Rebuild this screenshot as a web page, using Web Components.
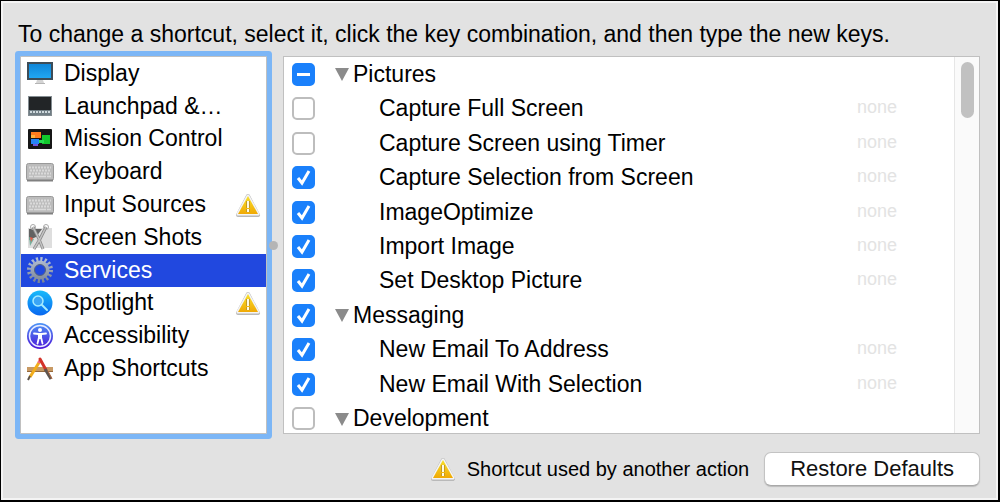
<!DOCTYPE html>
<html lang="en">
<head>
<meta charset="utf-8">
<title>Keyboard Shortcuts</title>
<style>
  body {
    margin: 0;
    font-family: "Liberation Sans", Arial, sans-serif;
    font-size: 23px;
    color: #000;
    background: #000;
  }
</style>
</head>
<body>
<prefs-window>
  <span slot="hint">To change a shortcut, select it, click the key combination, and then type the new keys.</span>

  <category-list slot="sidebar">
    <category-item icon="display">Display</category-item>
    <category-item icon="launchpad">Launchpad &amp;…</category-item>
    <category-item icon="mission">Mission Control</category-item>
    <category-item icon="keyboard">Keyboard</category-item>
    <category-item icon="keyboard" conflict>Input Sources</category-item>
    <category-item icon="shots">Screen Shots</category-item>
    <category-item icon="gear" selected>Services</category-item>
    <category-item icon="spotlight" conflict>Spotlight</category-item>
    <category-item icon="access">Accessibility</category-item>
    <category-item icon="apps">App Shortcuts</category-item>
  </category-list>

  <shortcut-list slot="main">
    <shortcut-row group state="mixed">Pictures</shortcut-row>
    <shortcut-row keys="none">Capture Full Screen</shortcut-row>
    <shortcut-row keys="none">Capture Screen using Timer</shortcut-row>
    <shortcut-row keys="none" state="on">Capture Selection from Screen</shortcut-row>
    <shortcut-row keys="none" state="on">ImageOptimize</shortcut-row>
    <shortcut-row keys="none" state="on">Import Image</shortcut-row>
    <shortcut-row keys="none" state="on">Set Desktop Picture</shortcut-row>
    <shortcut-row group state="on">Messaging</shortcut-row>
    <shortcut-row keys="none" state="on">New Email To Address</shortcut-row>
    <shortcut-row keys="none" state="on">New Email With Selection</shortcut-row>
    <shortcut-row group>Development</shortcut-row>
  </shortcut-list>

  <conflict-note slot="footer">Shortcut used by another action</conflict-note>
  <push-button slot="footer">Restore Defaults</push-button>
</prefs-window>

<script>
const ICONS = {
  display: `
    <defs><linearGradient id="g" x1="0" y1="0" x2="0" y2="1">
      <stop offset="0" stop-color="#0d83d6"/><stop offset="1" stop-color="#22a9f5"/></linearGradient></defs>
    <path d="M11 21h6l1 3h-8z" fill="#d4d4d4"/><path d="M9 24.500h10" stroke="#b5b5b5"/>
    <rect x="2" y="4" width="24" height="16" fill="url(#g)" stroke="#3d4c57" stroke-width="2"/>`,
  launchpad: `
    <rect x="2.500" y="4.500" width="23" height="19" fill="#222527" stroke="#848d92"/>
    <path d="M3 18h22v5H3z" fill="#6f7d84"/>
    <path d="M4 20h20" stroke="#cfd9dd" stroke-width="2" stroke-dasharray="2 1"/>`,
  mission: `
    <rect x="2" y="4" width="24" height="20" rx="1" fill="#161616"/>
    <path d="M5 7h10v6H5z" fill="#ff7c1e"/><path d="M5 10h4v3H5z" fill="#ffb13c"/>
    <path d="M5 14h8v5H5z" fill="#2685f5"/><path d="M7 19h5v2H7z" fill="#7155dc"/>
    <path d="M16 10h8v9h-8z" fill="#12c82c"/><path d="M13 15h5v3h-5z" fill="#25de50"/>`,
  keyboard: `
    <rect x=".5" y="5.500" width="27" height="17" rx="2" fill="#bcbcbc" stroke="#999"/>
    <path d="M1 22.500h26" stroke="#808080" stroke-width="2"/>
    <path d="M3 9.500h22M4 12.500h21M3 15.500h22" stroke="#dadada" stroke-width="2" stroke-dasharray="2 1"/>
    <path d="M3 18.500h4M8 18.500h12M21 18.500h4" stroke="#dadada" stroke-width="1.500"/>`,
  shots: `
    <rect x="2" y="5" width="24" height="20" fill="#dedede"/>
    <path d="M3 6h13l-6 8-7 3z" fill="#626262"/><path d="M3 14l5 2-4 7z" fill="#79af9d"/>
    <path d="M4 14l3 1-2 4z" fill="#e85b45"/>
    <path d="M7 4l6 12 4 10M20 4l-6 12-6 10" fill="none" stroke="#888" stroke-width="3"/>
    <path d="M7 4l6 12 4 10M20 4l-6 12-6 10" fill="none" stroke="#c4c4c4" stroke-width="1.500"/>
    <circle cx="7" cy="4" r="2.500" fill="none" stroke="#aaa"/><circle cx="20" cy="4" r="2.500" fill="none" stroke="#aaa"/>`,
  gear: `
    <defs><linearGradient id="g" gradientUnits="userSpaceOnUse" x1="0" y1="2" x2="0" y2="26">
      <stop offset="0" stop-color="#b4c0d6"/><stop offset="1" stop-color="#7b8596"/></linearGradient></defs>
    <circle cx="14" cy="14" r="11" fill="none" stroke="url(#g)" stroke-width="4" stroke-dasharray="2.160 2.160"/>
    <circle cx="14" cy="14" r="7.500" fill="none" stroke="url(#g)" stroke-width="4"/>
    <circle cx="14" cy="14" r="5.500" fill="none" stroke="#56637f"/>`,
  spotlight: `
    <defs><linearGradient id="g" x1="0" y1="0" x2="0" y2="1">
      <stop offset="0" stop-color="#18bbfa"/><stop offset="1" stop-color="#0967f0"/></linearGradient></defs>
    <circle cx="14" cy="14" r="12.500" fill="url(#g)"/>
    <circle cx="12" cy="12" r="5" fill="#3aa5f6" stroke="#a5ecff" stroke-width="1.500"/>
    <path d="M16 16l5 5" stroke="#a5ecff" stroke-width="2" stroke-linecap="round"/>`,
  access: `
    <defs><linearGradient id="g" x1="0" y1="0" x2="0" y2="1">
      <stop offset="0" stop-color="#4d95f6"/><stop offset="1" stop-color="#4b14d8"/></linearGradient></defs>
    <circle cx="14" cy="14" r="13" fill="url(#g)"/>
    <circle cx="14" cy="14" r="10.500" fill="none" stroke="#e9edff" stroke-width="1.500"/>
    <circle cx="14" cy="8" r="2" fill="#fff"/>
    <path d="M8 11.500l4.500.5M20 11.500l-4.500.5M12.800 16l-1.300 5.500M15.200 16l1.300 5.500" stroke="#fff" stroke-width="1.800" stroke-linecap="round"/>
    <path d="M12 11h4v6h-4z" fill="#fff"/>`,
  apps: `
    <path d="M1 12h26v5H1z" fill="#c89a64"/><path d="M1 16.500h26" stroke="#95693c"/>
    <path d="M14 6L4 22" stroke="#f2ad1b" stroke-width="3"/><path d="M14.500 5l-2 3" stroke="#ef6d86" stroke-width="3"/>
    <path d="M4 21l-2 4" stroke="#5b5146" stroke-width="2"/>
    <path d="M14 4l6 11" stroke="#d3332a" stroke-width="3" stroke-linecap="round"/>
    <path d="M19 14l6 10" stroke="#5e554f" stroke-width="3"/><path d="M22 16l4 8" stroke="#b96a3e"/>`,
  warning: `
    <defs><linearGradient id="g" x1="0" y1="0" x2="0" y2="1">
      <stop offset="0" stop-color="#f8e02c"/><stop offset="1" stop-color="#f0a905"/></linearGradient></defs>
    <path d="M13 4L23 23H3z" fill="#b9b9b9" stroke="#b9b9b9" stroke-width="4" stroke-linejoin="round"/>
    <path d="M13 4L23 22H3z" fill="#f4f4f4" stroke="#f4f4f4" stroke-width="3" stroke-linejoin="round"/>
    <path d="M13 4L23 22H3z" fill="url(#g)"/>
    <path d="M13 9v7M13 17v3" stroke="#c29a28" stroke-width="4"/>
    <path d="M13 9v7M13 17v3" stroke="#fffbe5" stroke-width="2"/>`
};

// Base class: attach an open root and fill it with the element's template
class BaseElement extends HTMLElement {
  constructor() {
    super();
    const template = document.createElement("template");
    template.innerHTML = this.render();
    this.attachShadow({ mode: "open" }).append(template.content.cloneNode(true));
  }
}

class PrefsIcon extends BaseElement {
  render() {
    const name = this.getAttribute("name");
    const size = name === "warning" ? 26 : 28;
    return `
      <style>
        :host { display: block; flex: none; }
        svg { display: block; }
      </style>
      <svg width="${size}" height="${size}" viewBox="0 0 ${size} ${size}" aria-hidden="true">${ICONS[name] || ""}</svg>
    `;
  }
}

class PrefsWindow extends BaseElement {
  render() {
    return `
      <style>
        :host {
          display: flex;
          flex-direction: column;
          box-sizing: border-box;
          min-height: 100vh;
          padding: 19px 18px 14px 16px;
          border: 2px solid #000;
          border-left-width: 1px;
          border-top-width: 1px;
          background: #e2e2e2;
          box-shadow: inset 0 0 0 2px #f4f4f4;
        }
        header { padding-left: 1px; line-height: 28px; white-space: nowrap; }
        main { display: flex; flex: 1; margin: 8px 0 18px 3px; }
        .splitter { flex: none; width: 16px; display: flex; align-items: center; padding-left: 2px; box-sizing: border-box; }
        .splitter i { width: 9px; height: 9px; border-radius: 50%; background: #b5b5b5; z-index: 1; }
        slot[name="main"] { display: flex; flex: 1; min-width: 0; }
        footer { display: flex; justify-content: flex-end; align-items: center; gap: 15px; }
      </style>
      <header><slot name="hint"></slot></header>
      <main>
        <slot name="sidebar"></slot>
        <div class="splitter"><i></i></div>
        <slot name="main"></slot>
      </main>
      <footer><slot name="footer"></slot></footer>
    `;
  }
}

class CategoryList extends BaseElement {
  render() {
    return `
      <style>
        :host {
          display: block;
          flex: none;
          box-sizing: border-box;
          width: 247px;
          border: 1px solid #c0c0c0;
          background: #fff;
          box-shadow: 0 0 0 5px #7cb6f6;
          border-radius: 1px;
        }
        nav { display: grid; grid-auto-rows: 1fr; height: 328px; }
      </style>
      <nav aria-label="Categories"><slot></slot></nav>
    `;
  }
}

class CategoryItem extends BaseElement {
  render() {
    const warning = this.hasAttribute("conflict") ? `<prefs-icon name="warning"></prefs-icon>` : "";
    return `
      <style>
        :host { display: grid; }
        button {
          display: flex;
          align-items: center;
          gap: 10px;
          padding: 0 5px;
          border: 0;
          background: none;
          color: inherit;
          font: inherit;
          text-align: left;
        }
        span { flex: 1; white-space: nowrap; }
        :host([selected]) button { background: #2148df; color: #fff; }
      </style>
      <button type="button">
        <prefs-icon name="${this.getAttribute("icon")}"></prefs-icon>
        <span><slot></slot></span>
        ${warning}
      </button>
    `;
  }
}

class ShortcutList extends BaseElement {
  render() {
    return `
      <style>
        :host {
          display: flex;
          flex: 1;
          min-width: 0;
          border: 1px solid #c0c0c0;
          background: #fff;
        }
        .view { flex: 1; min-width: 0; height: 375px; overflow: hidden; }
        .rows { display: grid; grid-auto-rows: 1fr; height: 379px; }
        .track { width: 13px; padding: 5px 5px 5px 6px; border-left: 1px solid #e6e6e6; background: #fafafa; }
        .thumb { height: 56px; border-radius: 7px; background: #c1c1c1; }
      </style>
      <div class="view"><div class="rows"><slot></slot></div></div>
      <div class="track"><div class="thumb"></div></div>
    `;
  }
}

class ShortcutRow extends BaseElement {
  render() {
    const group = this.hasAttribute("group");
    const keys = this.getAttribute("keys");
    return `
      <style>
        :host { display: flex; align-items: center; padding: 0 57px 0 8px; }
        .box { display: grid; flex: none; margin-right: 19px; }
        .box > * { grid-area: 1 / 1; }
        input {
          appearance: none;
          box-sizing: border-box;
          width: 23px;
          height: 23px;
          margin: 0;
          border: 2px solid #bdbdbd;
          border-radius: 5px;
          background: #fff;
        }
        input:checked, input:indeterminate { border-color: #1a80fb; background: #1a80fb; }
        .box svg { fill: none; stroke: #fff; stroke-width: 3; pointer-events: none; visibility: hidden; }
        input:checked ~ .tick, input:indeterminate ~ .dash { visibility: visible; }
        .arrow { display: block; width: 16px; height: 24px; padding: 0; border: 0; background: none; }
        .arrow svg { display: block; }
        label { flex: 1; margin-left: 3px; white-space: nowrap; }
        :host(:not([group])) label { margin-left: 45px; }
        .keys { font-size: 18px; line-height: 20px; padding-bottom: 3px; color: #e3e3e3; }
      </style>
      <div class="box">
        <input type="checkbox" id="enabled">
        <svg class="tick" width="23" height="23"><path d="M6 12l4 5 7-12"/></svg>
        <svg class="dash" width="23" height="23"><path d="M5 11.500h13"/></svg>
      </div>
      ${group ? `<button class="arrow" type="button" aria-label="Collapse"><svg width="16" height="24"><path d="M1 6h14l-7 13z" fill="#8b8b8b"/></svg></button>` : ""}
      <label for="enabled"><slot></slot></label>
      ${keys ? `<span class="keys">${keys}</span>` : ""}
    `;
  }

  connectedCallback() {
    const input = this.shadowRoot.querySelector("input");
    input.checked = this.getAttribute("state") === "on";
    input.indeterminate = this.getAttribute("state") === "mixed";
  }
}

class ConflictNote extends BaseElement {
  render() {
    return `
      <style>
        :host { display: flex; align-items: center; gap: 11px; font-size: 20px; white-space: nowrap; }
      </style>
      <prefs-icon name="warning"></prefs-icon>
      <span><slot></slot></span>
    `;
  }
}

class PushButton extends BaseElement {
  render() {
    return `
      <style>
        :host { display: block; }
        button {
          display: block;
          height: 34px;
          padding: 0 25px;
          border: 1px solid #c3c3c3;
          border-bottom-color: #a9a9a9;
          border-radius: 7px;
          background: #fff;
          box-shadow: 0 1px 1px #bcbcbc;
          color: #111;
          font: inherit;
          font-size: 22px;
          white-space: nowrap;
        }
      </style>
      <button type="button"><slot></slot></button>
    `;
  }
}

customElements.define("prefs-icon", PrefsIcon);
customElements.define("prefs-window", PrefsWindow);
customElements.define("category-list", CategoryList);
customElements.define("category-item", CategoryItem);
customElements.define("shortcut-list", ShortcutList);
customElements.define("shortcut-row", ShortcutRow);
customElements.define("conflict-note", ConflictNote);
customElements.define("push-button", PushButton);
</script>
</body>
</html>
